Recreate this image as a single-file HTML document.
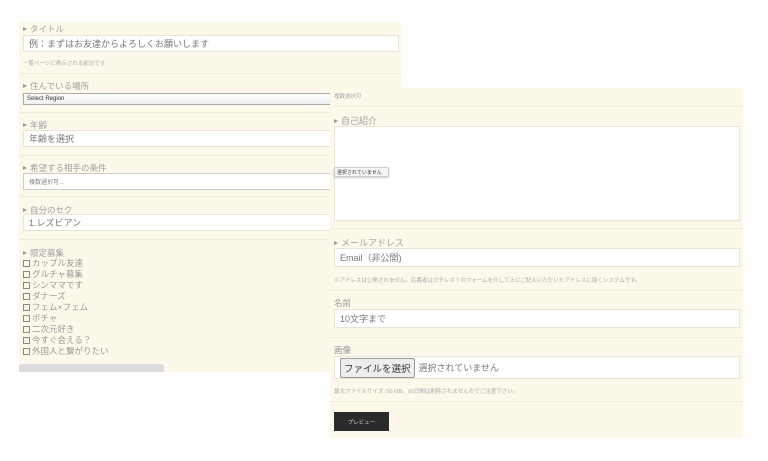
<!DOCTYPE html>
<html><head><meta charset="utf-8"><style>
*{margin:0;padding:0;box-sizing:border-box}
body{width:768px;height:461px;background:#fff;position:relative;overflow:hidden;font-family:"Liberation Sans","Noto Sans CJK JP",sans-serif;color:#999}
.p{position:absolute;background:#fcf9ea}
.a{position:absolute;white-space:nowrap}
.l{font-size:8.5px;color:#a0a0a0}
.l:before{content:"";display:inline-block;border-left:4px solid #999;border-top:2.5px solid transparent;border-bottom:2.5px solid transparent;margin-right:3px;vertical-align:1px}
.in{position:absolute;background:#fff;border:1px solid #e8e5d8;font-size:9px;color:#777;padding-left:5px;display:flex;align-items:center}
.n{font-size:5.5px;color:#aaa}
.s{position:absolute;height:1px;background:#efecdc}
.cb{font-size:8.5px;color:#999;line-height:11px}
.cb span{display:inline-block;width:7px;height:7px;border:1px solid #888;margin-right:2px;vertical-align:-1px}
</style></head><body>
<div class="p" style="left:19px;top:22px;width:382px;height:350px"></div>
<div class="a l" style="left:23px;top:23px">タイトル</div>
<div class="in" style="left:23px;top:35px;width:376px;height:17px">例：まずはお友達からよろしくお願いします</div>
<div class="a n" style="left:23px;top:59px">一覧ページに表示される部分です</div>
<div class="s" style="left:19px;top:73px;width:382px"></div>
<div class="a l" style="left:23px;top:80px">住んでいる場所</div>
<div class="in" style="left:23px;top:93px;width:310px;height:12px;font-size:6px;color:#333;background:linear-gradient(#fff,#eee);border-color:#aaa;padding-left:3px">Select Region</div>
<div class="s" style="left:19px;top:112px;width:382px"></div>
<div class="a l" style="left:23px;top:119px">年齢</div>
<div class="in" style="left:23px;top:130px;width:310px;height:17px">年齢を選択</div>
<div class="s" style="left:19px;top:155px;width:382px"></div>
<div class="a l" style="left:23px;top:162px">希望する相手の条件</div>
<div class="in" style="left:23px;top:173px;width:310px;height:17px;font-size:6px;color:#888;border-color:#ccc">複数選択可…</div>
<div class="s" style="left:19px;top:196px;width:382px"></div>
<div class="a l" style="left:23px;top:204px">自分のセク</div>
<div class="in" style="left:23px;top:214px;width:310px;height:17px">1.レズビアン</div>
<div class="s" style="left:19px;top:239px;width:382px"></div>
<div class="a l" style="left:23px;top:247px">限定募集</div>
<div class="a cb" style="left:23px;top:258px">
<div><span></span>カップル友達</div><div><span></span>グルチャ募集</div><div><span></span>シンママです</div><div><span></span>ダナーズ</div><div><span></span>フェム×フェム</div><div><span></span>ボチャ</div><div><span></span>二次元好き</div><div><span></span>今すぐ会える？</div><div><span></span>外国人と繋がりたい</div></div>
<div class="a" style="left:19px;top:364px;width:145px;height:8px;background:#dcdbe0;border-radius:3px 3px 0 0"></div>

<div class="p" style="left:330px;top:88px;width:413px;height:350px"></div>
<div class="a n" style="left:334px;top:92px">複数選択可</div>
<div class="s" style="left:330px;top:106px;width:413px"></div>
<div class="a l" style="left:334px;top:114px;font-size:9px">自己紹介</div>
<div class="in" style="left:334px;top:126px;width:406px;height:95px"></div>
<div class="a" style="left:334px;top:167px;width:55px;height:10px;background:#f6f6f6;border:1px solid #ccc;border-radius:2px;font-size:5px;color:#333;padding:1px 2px;box-shadow:0 1px 2px rgba(0,0,0,.2)">選択されていません</div>
<div class="s" style="left:330px;top:228px;width:413px"></div>
<div class="a l" style="left:334px;top:236px;font-size:9px">メールアドレス</div>
<div class="in" style="left:334px;top:248px;width:406px;height:19px">Email（非公開)</div>
<div class="a n" style="left:334px;top:276px">※アドレスは公開されません。応募者はガチレズ！のフォームを介して上にご記入いただいたアドレスに届くシステムです。</div>
<div class="s" style="left:330px;top:290px;width:413px"></div>
<div class="a" style="left:334px;top:297px;font-size:8.5px">名前</div>
<div class="in" style="left:334px;top:309px;width:406px;height:19px">10文字まで</div>
<div class="s" style="left:330px;top:337px;width:413px"></div>
<div class="a" style="left:334px;top:344px;font-size:8.5px">画像</div>
<div class="in" style="left:334px;top:356px;width:406px;height:23px;padding-left:5px"><span style="border:1px solid #999;background:#eee;color:#333;font-size:9.5px;padding:2px 3px;border-radius:2px;margin-right:4px">ファイルを選択</span>選択されていません</div>
<div class="a n" style="left:334px;top:387px">最大ファイルサイズ: 50 MB。90日間は削除されませんのでご注意下さい。</div>
<div class="s" style="left:330px;top:401px;width:413px"></div>
<div class="a" style="left:334px;top:412px;width:55px;height:19px;background:#2b2b2b;color:#ccc;font-size:5.5px;display:flex;align-items:center;justify-content:center">プレビュー</div>
</body></html>
